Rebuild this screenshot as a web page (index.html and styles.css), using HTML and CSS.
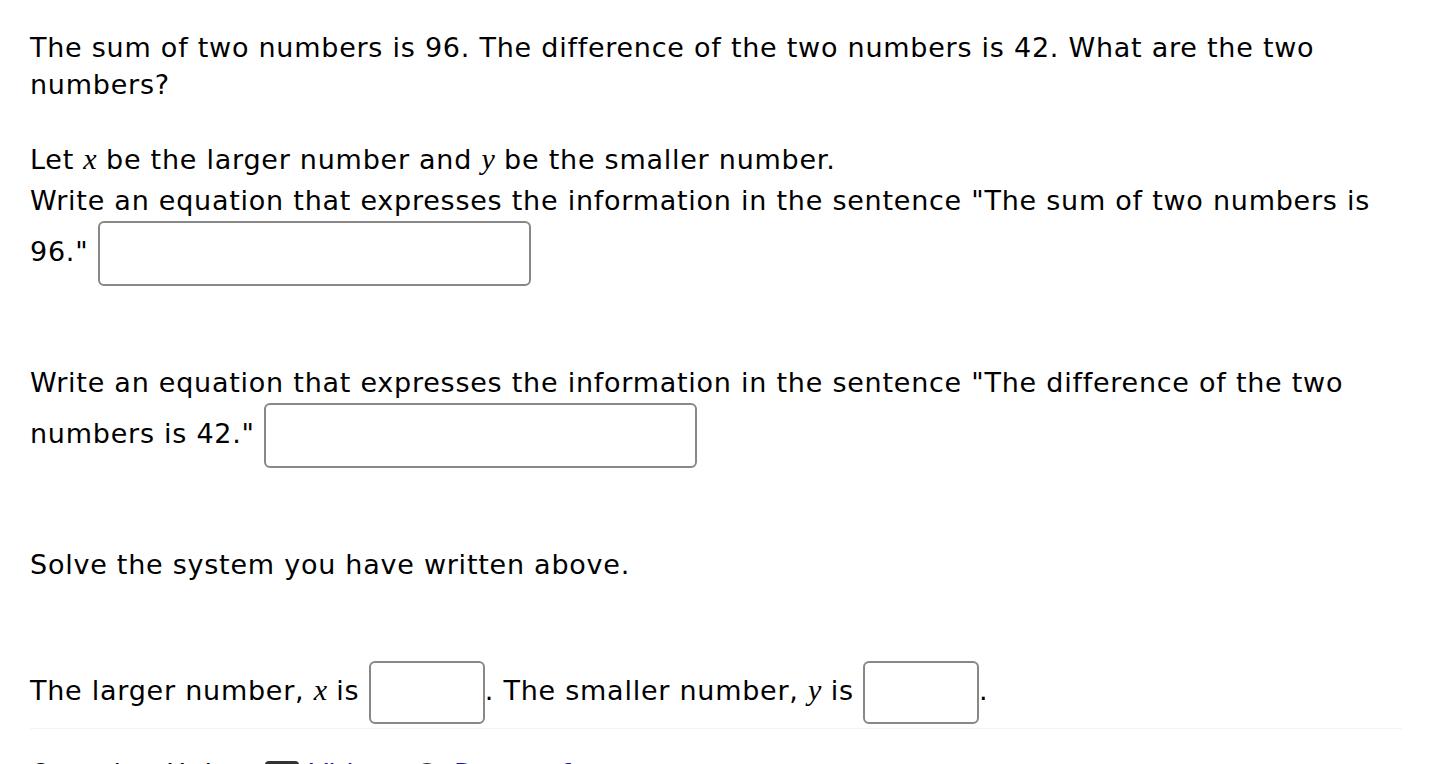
FILE: index.html
```html
<!DOCTYPE html>
<html lang="en">
<head>
  <meta charset="UTF-8" />
  <title>Question</title>
  <link rel="stylesheet" href="styles.css">
</head>
<body>
  <div class="question">
    <p class="intro">The sum of two numbers is 96. The difference of the two numbers is 42. What are the two numbers?</p>

    <p class="part">Let <span class="m">x</span> be the larger number and <span class="m">y</span> be the smaller number.<br>
      Write an equation that expresses the information in the sentence "The sum of two numbers is 96." <input type="text" class="ans wide"></p>

    <p class="part">Write an equation that expresses the information in the sentence "The difference of the two numbers is 42." <input type="text" class="ans wide"></p>

    <p class="part">Solve the system you have written above.</p>

    <p class="part last">The larger number, <span class="m">x</span> is <input type="text" class="ans short">. The smaller number, <span class="m">y</span> is <input type="text" class="ans short">.</p>

    <div class="help">
      <span>Question Help:</span>
      <a href="#" class="video"><span class="ico box"></span>Video</a>
      <a href="#" class="forum"><span class="ico circ"></span>Post to forum</a>
    </div>
  </div>
</body>
</html>
```

FILE: styles.css
```css
body {
  margin: 0;
  font-family: 'DejaVu Sans', sans-serif;
  color: #000;
  background: #fff;
}
.question {
  width: 1372px;
  padding: 29px 30px 0;
  font-size: 27px;
  letter-spacing: 0.75px;
}
p {
  margin: 0;
}
.intro {
  line-height: 37px;
  margin-bottom: 35px;
}
.part {
  line-height: 41px;
  margin-bottom: 76px;
}
.m {
  font-family: 'Liberation Serif', serif;
  font-style: italic;
  font-size: 30px;
  letter-spacing: 0;
}
.ans {
  display: inline-block;
  vertical-align: middle;
  width: 433px;
  height: 65px;
  box-sizing: border-box;
  border: 2px solid #888;
  border-radius: 6px;
  background: #fff;
  margin: 0;
  padding: 0 8px;
  font-size: 20px;
}
.short {
  width: 116px;
  height: 63px;
}
.last {
  margin-bottom: 0;
  padding-bottom: 4px;
}
.help {
  display: flex;
  align-items: center;
  padding-top: 24px;
  line-height: 41px;
  border-top: 1px solid #f4f4f4;
}
.help a {
  color: #1a0dab;
  text-decoration: none;
  display: flex;
  align-items: center;
}
.video {
  margin-left: 24px;
}
.forum {
  margin-left: 27px;
}
.ico {
  display: inline-block;
  box-sizing: border-box;
  border: 3px solid #333;
}
.box {
  width: 34px;
  height: 26px;
  border-radius: 4px;
  margin-right: 11px;
}
.circ {
  width: 22px;
  height: 22px;
  border-radius: 50%;
  margin-right: 16px;
}
```
